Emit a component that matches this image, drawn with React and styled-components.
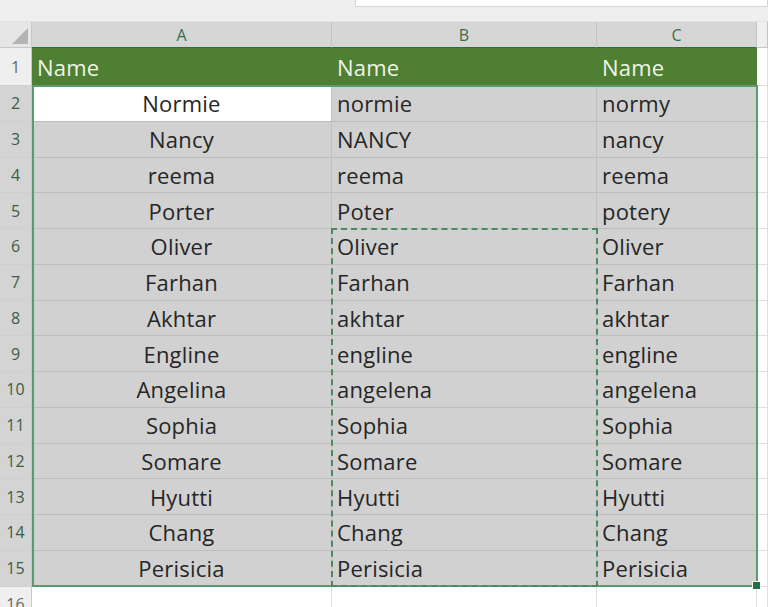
import React from "react";
import styled, { createGlobalStyle } from "styled-components";

const G = createGlobalStyle`
  html,body{margin:0;padding:0;background:#fff;overflow:hidden;}
  *{box-sizing:border-box;}
`;
const Page = styled.div`
  width:768px;height:607px;font-family:"Open Sans","Noto Sans",sans-serif;
  display:flex;flex-direction:column;background:#fff;overflow:hidden;
`;
const TopBar = styled.div`
  flex-shrink:0;height:22px;background:#efefef;display:flex;justify-content:flex-end;align-items:flex-start;
  border-bottom:1px solid #e2e2e2;
`;
const NameBox = styled.div`
  width:413px;height:7px;background:#fff;border:1px solid #d6d6d6;border-top:none;
`;
const Sheet = styled.div`
  flex-shrink:0;position:relative;display:grid;
  grid-template-columns:32px 300px 265px 160px 1fr;
  grid-template-rows:26px 38px repeat(15, 35.75px);
`;
const Corner = styled.div`
  background:#e6e6e6;border-right:1px solid #c8c8c8;border-bottom:1px solid #c8c8c8;position:relative;
  &::after{content:"";position:absolute;right:3px;bottom:3px;border-style:solid;border-width:0 0 16px 16px;border-color:transparent transparent #b4b4b4 transparent;}
`;
const ColHead = styled.div`
  background:${p=>p.$fill?"#d6d6d6":"#efefef"};border-right:1px solid #c4c4c4;border-bottom:1px solid ${p=>p.$fill?"#217346":"#c8c8c8"};
  display:flex;align-items:center;justify-content:center;color:#3a6e4a;font-size:16px;
`;
const RowHead = styled.div`
  background:${p=>p.$sel?"#d4d4d4":"#efefef"};border-right:1px solid #c8c8c8;border-bottom:1px solid #cfcfcf;
  display:flex;align-items:center;justify-content:center;color:${p=>p.$sel?"#3b5e46":"#666"};font-size:16px;
`;
const Cell = styled.div`
  background:${p=>p.$head?"#4f7f32":p.$white?"#fff":p.$sel?"#d1d1d1":"#fff"};
  color:${p=>p.$head?"#eef5e8":"#262626"};
  border-right:1px solid ${p=>p.$head?"#4f7f32":p.$sel?"#c0c0c0":"#dedede"};
  border-bottom:1px solid ${p=>p.$head?"#3e6a26":p.$sel?"#bdbdbd":"#dedede"};
  display:flex;align-items:center;justify-content:${p=>p.$center?"center":"flex-start"};
  padding:0 5px;font-size:22px;letter-spacing:0.2px;white-space:nowrap;overflow:hidden;
`;
const Selection = styled.div`
  position:absolute;left:32px;top:63px;width:726px;height:502px;border:2px solid #5a9a70;pointer-events:none;
  &::after{content:"";position:absolute;right:-5px;bottom:-5px;width:7px;height:7px;background:#217346;border:1px solid #fff;}
`;
const Ants = styled.div`
  position:absolute;left:331px;top:206px;width:267px;height:359px;border:2px dashed #4b8a60;pointer-events:none;
`;

const rows = [
  ["Normie","normie","normy"],["Nancy","NANCY","nancy"],["reema","reema","reema"],
  ["Porter","Poter","potery"],["Oliver","Oliver","Oliver"],["Farhan","Farhan","Farhan"],
  ["Akhtar","akhtar","akhtar"],["Engline","engline","engline"],["Angelina","angelena","angelena"],
  ["Sophia","Sophia","Sophia"],["Somare","Somare","Somare"],["Hyutti","Hyutti","Hyutti"],
  ["Chang","Chang","Chang"],["Perisicia","Perisicia","Perisicia"],
];

export default function App(){
  return (<Page><G/>
    <TopBar><NameBox/></TopBar>
    <Sheet>
      <Corner/>
      <ColHead $fill>A</ColHead><ColHead $fill>B</ColHead><ColHead $fill>C</ColHead><ColHead/>
      <RowHead>1</RowHead>
      <Cell $head>Name</Cell><Cell $head>Name</Cell><Cell $head>Name</Cell><Cell/>
      {rows.map((r,i)=>(
        <React.Fragment key={i}>
          <RowHead $sel>{i+2}</RowHead>
          <Cell $sel $center $white={i===0}>{r[0]}</Cell>
          <Cell $sel>{r[1]}</Cell>
          <Cell $sel>{r[2]}</Cell>
          <Cell/>
        </React.Fragment>
      ))}
      <RowHead>16</RowHead><Cell/><Cell/><Cell/><Cell/>
      <Selection/><Ants/>
    </Sheet>
  </Page>);
}
